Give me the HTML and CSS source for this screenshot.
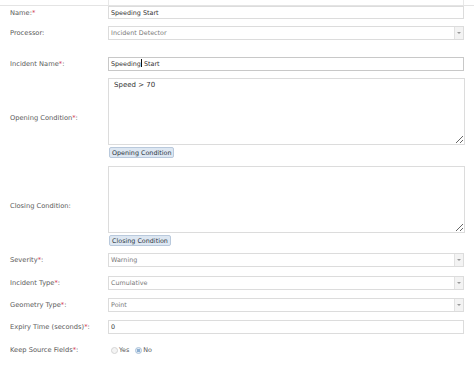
FILE: index.html
```html
<!DOCTYPE html>
<html lang="en">
<head>
  <meta charset="UTF-8">
  <title>Incident Detector</title>
  <link rel="stylesheet" href="styles.css">
</head>
<body>
<div class="top-strip">
  <div class="cut-box"></div>
</div>

<form class="form">
  <div class="row">
    <label>Name:<span class="req">*</span></label>
    <input class="input" type="text" value="Speeding Start">
  </div>

  <div class="row">
    <label>Processor:</label>
    <div class="select">Incident Detector<span class="arrow"></span></div>
  </div>

  <div class="row gap-big">
    <label>Incident Name<span class="req">*</span>:</label>
    <!-- поле в фокусе, рисуем курсор -->
    <div class="input focused">Speeding<span class="caret"></span> Start</div>
  </div>

  <div class="row">
    <label>Opening Condition<span class="req">*</span>:</label>
    <div class="cond">
      <textarea class="area">Speed &gt; 70</textarea>
      <button type="button" class="cond-btn">Opening Condition</button>
    </div>
  </div>

  <div class="row gap-mid">
    <label>Closing Condition:</label>
    <div class="cond">
      <textarea class="area"></textarea>
      <button type="button" class="cond-btn">Closing Condition</button>
    </div>
  </div>

  <div class="row">
    <label>Severity<span class="req">*</span>:</label>
    <div class="select">Warning<span class="arrow"></span></div>
  </div>

  <div class="row gap-plus2">
    <label>Incident Type<span class="req">*</span>:</label>
    <div class="select">Cumulative<span class="arrow"></span></div>
  </div>

  <div class="row gap-plus1">
    <label>Geometry Type<span class="req">*</span>:</label>
    <div class="select">Point<span class="arrow"></span></div>
  </div>

  <div class="row gap-plus1">
    <label>Expiry Time (seconds)<span class="req">*</span>:</label>
    <input class="input" type="text" value="0">
  </div>

  <div class="row gap-plus3">
    <label>Keep Source Fields<span class="req">*</span>:</label>
    <div class="radios">
      <span class="radio"></span>Yes
      <span class="radio checked"></span>No
    </div>
  </div>
</form>
</body>
</html>
```

FILE: styles.css
```css
* {
  margin: 0;
  padding: 0;
  box-sizing: border-box;
}
body {
  background: #fff;
  font-family: "DejaVu Sans", Verdana, sans-serif;
  color: #555;
  width: 474px;
  overflow: hidden;
}

/* обрезанный блок сверху */
.top-strip {
  height: 6px;
  border-bottom: 1px solid #e4e4e4;
  padding-left: 108px;
  padding-right: 10px;
}
.cut-box {
  height: 5px;
  border-left: 1px solid #e8e8e8;
  border-right: 1px solid #e8e8e8;
}

.form {
  display: flex;
  flex-direction: column;
  gap: 7px;
  padding: 0 10px 0 10px;
}
.row {
  display: grid;
  grid-template-columns: 98px 1fr;
  align-items: center;
}
.row label {
  font-size: 6.7px;
  color: #5a5a5a;
}
.req {
  color: #d0304a;
}
.gap-big { margin-top: 10px; }
.gap-mid { margin-top: 1px; }
.gap-plus1 { margin-top: 1px; }
.gap-plus2 { margin-top: 2px; }
.gap-plus3 { margin-top: 3px; }

/* поля */
.input,
.select {
  display: block;
  height: 14px;
  line-height: 12px;
  border: 1px solid #dcdcdc;
  background: #fff;
  font-family: "DejaVu Sans", Verdana, sans-serif;
  font-size: 6.4px;
  color: #333;
  padding: 0 2px;
  outline: none;
  white-space: pre;
}
.row:first-child .input {
  height: 13px;
  line-height: 11px;
}
.focused {
  border-color: #c8c8c8;
}
.caret {
  display: inline-block;
  width: 1px;
  height: 8px;
  vertical-align: -1px;
  background: #111;
}
.select {
  color: #7a7a7a;
  position: relative;
}
.arrow {
  position: absolute;
  top: 0;
  right: 0;
  width: 9px;
  height: 100%;
  background: #f3f3f3;
  border-left: 1px solid #e2e2e2;
}
.arrow::after {
  content: "";
  position: absolute;
  left: 2px;
  top: 5px;
  border-left: 2px solid transparent;
  border-right: 2px solid transparent;
  border-top: 2px solid #999;
}

/* условия */
.cond {
  display: flex;
  flex-direction: column;
  align-items: flex-start;
}
.area {
  width: 357px;
  height: 67px;
  border: 1px solid #dcdcdc;
  font-family: "DejaVu Sans", Verdana, sans-serif;
  font-size: 7px;
  color: #333;
  padding: 2px 5px;
  outline: none;
}
.cond-btn {
  margin-top: 2px;
  margin-left: 1px;
  height: 11px;
  padding: 0 2px;
  font-family: "DejaVu Sans", Verdana, sans-serif;
  font-size: 6.4px;
  color: #2a3340;
  background: #dde7f2;
  border: 1px solid #b9c9dc;
  border-radius: 2px;
}

/* радио */
.radios {
  display: flex;
  align-items: center;
  font-size: 6.4px;
  color: #555;
  padding-left: 3px;
  height: 12px;
}
.radio {
  width: 7px;
  height: 7px;
  border-radius: 50%;
  border: 1px solid #d4d4d4;
  background: #f4f4f4;
  margin-right: 1px;
}
.radio.checked {
  margin-left: 6px;
  border-color: #a9c1d9;
  background: radial-gradient(circle, #8fb0d2 0 45%, #e3ecf5 55%);
}
```
